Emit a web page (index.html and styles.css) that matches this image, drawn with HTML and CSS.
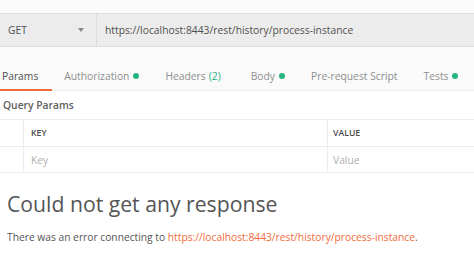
FILE: index.html
```html
<!DOCTYPE html>
<html>
<head>
<meta charset="utf-8">
<link rel="stylesheet" href="styles.css">
</head>
<body>
<div class="top"></div>
<div class="urlbar">
  <div class="method"><span>GET</span><span class="caret"></span></div>
  <div class="url">https://localhost:8443/rest/history/process-instance</div>
</div>
<div class="gap"></div>
<div class="tabs">
  <div class="tab active">Params</div>
  <div class="tab">Authorization <i class="dot"></i></div>
  <div class="tab wide">Headers <span class="count">(2)</span></div>
  <div class="tab">Body <i class="dot"></i></div>
  <div class="tab">Pre-request Script</div>
  <div class="tab">Tests <i class="dot"></i></div>
</div>
<div class="qp">Query Params</div>
<div class="table">
  <div class="row head">
    <div class="c0"></div>
    <div class="c1">KEY</div>
    <div class="c2">VALUE</div>
  </div>
  <div class="row">
    <div class="c0"></div>
    <div class="c1 ph">Key</div>
    <div class="c2 ph">Value</div>
  </div>
</div>
<div class="resp">
  <h1>Could not get any response</h1>
  <p>There was an error connecting to <a>https://localhost:8443/rest/history/process-instance</a>.</p>
</div>
</body>
</html>
```
FILE: styles.css
```css
html, body { margin: 0; padding: 0; background: #fff; }
body { font-family: "Open Sans", "Noto Sans", sans-serif; color: #505050; width: 474px; height: 258px; overflow: hidden; }
.top { height: 13px; background: #fafafa; }
.urlbar { display: flex; height: 32px; background: #ececec; border-top: 1px solid #dedede; border-bottom: 1px solid #dedede; }
.method { width: 97px; display: flex; align-items: center; justify-content: space-between; padding: 0 12px 0 8px; box-sizing: border-box; border-right: 1px solid #dcdcdc; font-size: 10.3px; color: #505050; }
.caret { width: 0; height: 0; border-left: 3px solid transparent; border-right: 3px solid transparent; border-top: 4px solid #8a8a8a; }
.url { flex: 1; display: flex; align-items: center; padding-left: 8px; font-size: 10.3px; color: #505050; }
.gap { height: 14px; background: #fafafa; }
.tabs { display: flex; height: 29px; border-bottom: 1px solid #ececec; background: #fafafa; }
.tab { font-size: 10.3px; color: #8e8e8e; display: flex; align-items: center; margin-right: 26px; position: relative; white-space: nowrap; }
.tab.wide { margin-right: 30px; }
.tab:first-child { padding-left: 2px; }
.tab.active { color: #505050; }
.tab.active::after { content: ""; position: absolute; left: 0; right: -14px; bottom: -1px; height: 2px; background: #f26b3a; }
.dot { display: inline-block; width: 6px; height: 6px; border-radius: 50%; background: #26b47f; margin-left: 4px; }
.count { color: #26b47f; margin-left: 3px; }
.qp { font-size: 10.3px; font-weight: 600; color: #606060; height: 28px; line-height: 28px; padding-left: 3px; }
.table { border-top: 1px solid #ececec; border-bottom: 1px solid #ececec; }
.row { display: flex; height: 26px; }
.row + .row { border-top: 1px solid #ececec; height: 25px; }
.c0 { width: 23px; border-right: 1px solid #ececec; }
.c1 { width: 304px; box-sizing: border-box; border-right: 1px solid #ececec; padding-left: 7px; display: flex; align-items: center; font-size: 8.7px; font-weight: 600; color: #4a4a4a; }
.c2 { flex: 1; padding-left: 5px; display: flex; align-items: center; font-size: 8.7px; font-weight: 600; color: #4a4a4a; }
.ph { font-size: 10.3px; font-weight: 400; color: #b0b0b0; }
.resp { padding-left: 7px; padding-top: 17px; }
h1 { margin: 0; font-weight: 400; font-size: 21.2px; color: #555; line-height: 28px; }
p { margin: 12px 0 0; font-size: 10.25px; color: #555; }
a { color: #f26b3a; }
```
